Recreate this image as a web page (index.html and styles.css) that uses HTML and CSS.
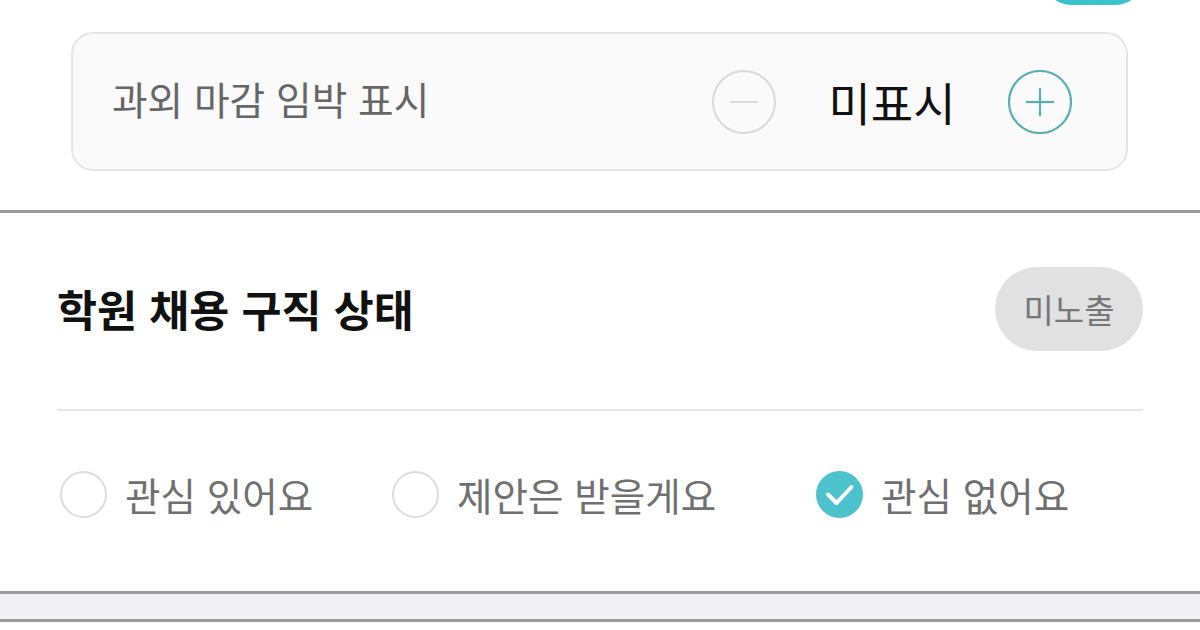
FILE: index.html
```
<!DOCTYPE html>
<html lang="ko">
<head>
<meta charset="utf-8">
<link rel="stylesheet" href="styles.css">
</head>
<body>
<div class="page">
  <div class="top-row"><div class="prev-btn"></div></div>

  <div class="card">
    <div class="card-label">과외 마감 임박 표시</div>
    <div class="stepper">
      <div class="step-btn minus">
        <svg viewBox="0 0 64 64" width="64" height="64"><circle cx="32" cy="32" r="31" fill="none" stroke="#d9d9d9" stroke-width="2"/><line x1="18" y1="32" x2="46" y2="32" stroke="#dcdcdc" stroke-width="2"/></svg>
      </div>
      <div class="step-value">미표시</div>
      <div class="step-btn plus">
        <svg viewBox="0 0 64 64" width="64" height="64"><circle cx="32" cy="32" r="31" fill="none" stroke="#57b0b4" stroke-width="2.2"/><line x1="18" y1="32" x2="46" y2="32" stroke="#57b0b4" stroke-width="2.2"/><line x1="32" y1="18" x2="32" y2="46" stroke="#57b0b4" stroke-width="2.2"/></svg>
      </div>
    </div>
  </div>

  <div class="thick-divider"></div>

  <section class="status">
    <div class="status-head">
      <h2 class="status-title">학원 채용 구직 상태</h2>
      <div class="status-pill">미노출</div>
    </div>
    <div class="thin-divider"></div>
    <div class="radio-row">
      <div class="radio-item">
        <span class="radio"></span>
        <span class="radio-text">관심 있어요</span>
      </div>
      <div class="radio-item">
        <span class="radio"></span>
        <span class="radio-text">제안은 받을게요</span>
      </div>
      <div class="radio-item">
        <span class="radio checked">
          <svg viewBox="0 0 47 47" width="47" height="47"><circle cx="23.5" cy="23.5" r="23.5" fill="#4cc3cc"/><polyline points="12,23.5 20.5,32 35.5,16" fill="none" stroke="#fff" stroke-width="4" stroke-linecap="round" stroke-linejoin="round"/></svg>
        </span>
        <span class="radio-text">관심 없어요</span>
      </div>
    </div>
  </section>

  <div class="band"></div>
</div>
</body>
</html>
```
FILE: styles.css
```
* { box-sizing: border-box; }
html, body { margin: 0; padding: 0; background: #fff; }
body {
  font-family: "Noto Sans CJK KR", "Noto Sans", sans-serif;
  width: 1200px;
  height: 630px;
  overflow: hidden;
}
.page { width: 1200px; }

.top-row {
  display: flex;
  justify-content: flex-end;
  height: 0;
  padding-right: 55px;
}
.prev-btn {
  width: 103px;
  height: 60px;
  margin-top: -55px;
  border-radius: 30px;
  background: linear-gradient(90deg, #35c2c6, #3bc6cf);
}

.card {
  margin: 32px 72px 0 71px;
  height: 139px;
  border: 2px solid #e5e5e5;
  border-radius: 22px;
  background: #fafafa;
  display: flex;
  align-items: center;
  justify-content: space-between;
  padding: 0 54px 0 39px;
}
.card-label {
  font-size: 38.7px;
  color: #666;
  line-height: 1;
  padding-bottom: 6px;
}
.stepper {
  display: flex;
  align-items: center;
}
.step-btn { width: 64px; height: 64px; display: flex; }
.step-btn svg { display: block; }
.step-value {
  width: 232px;
  text-align: center;
  font-size: 46px;
  color: #111;
  line-height: 1;
  padding-bottom: 2px;
}

.thick-divider {
  margin-top: 39px;
  height: 3px;
  background: #9c9c9c;
}

.status { padding: 0 57px; }
.status-head {
  display: flex;
  align-items: center;
  justify-content: space-between;
  padding: 54px 0 58px;
}
.status-title {
  margin: 0;
  font-size: 43.5px;
  font-weight: 700;
  color: #111;
  line-height: 1;
}
.status-pill {
  width: 148px;
  height: 84px;
  border-radius: 42px;
  background: #e1e1e1;
  color: #777;
  font-size: 33px;
  display: flex;
  align-items: center;
  justify-content: center;
}
.thin-divider {
  height: 2px;
  background: #e6e6e6;
}
.radio-row {
  display: grid;
  grid-template-columns: 332px 424px auto;
  padding: 60px 0 73px 3px;
}
.radio-item {
  display: flex;
  align-items: center;
  gap: 18px;
}
.radio {
  width: 47px;
  height: 47px;
  border-radius: 50%;
  border: 2px solid #dcdcdc;
  flex: none;
}
.radio.checked { border: none; }
.radio.checked svg { display: block; }
.radio-text {
  font-size: 38.6px;
  color: #707070;
  line-height: 1;
}

.band {
  height: 31px;
  background: #f0f0f4;
  border-top: 3px solid #9c9c9c;
  border-bottom: 3px solid #9c9c9c;
}
```
